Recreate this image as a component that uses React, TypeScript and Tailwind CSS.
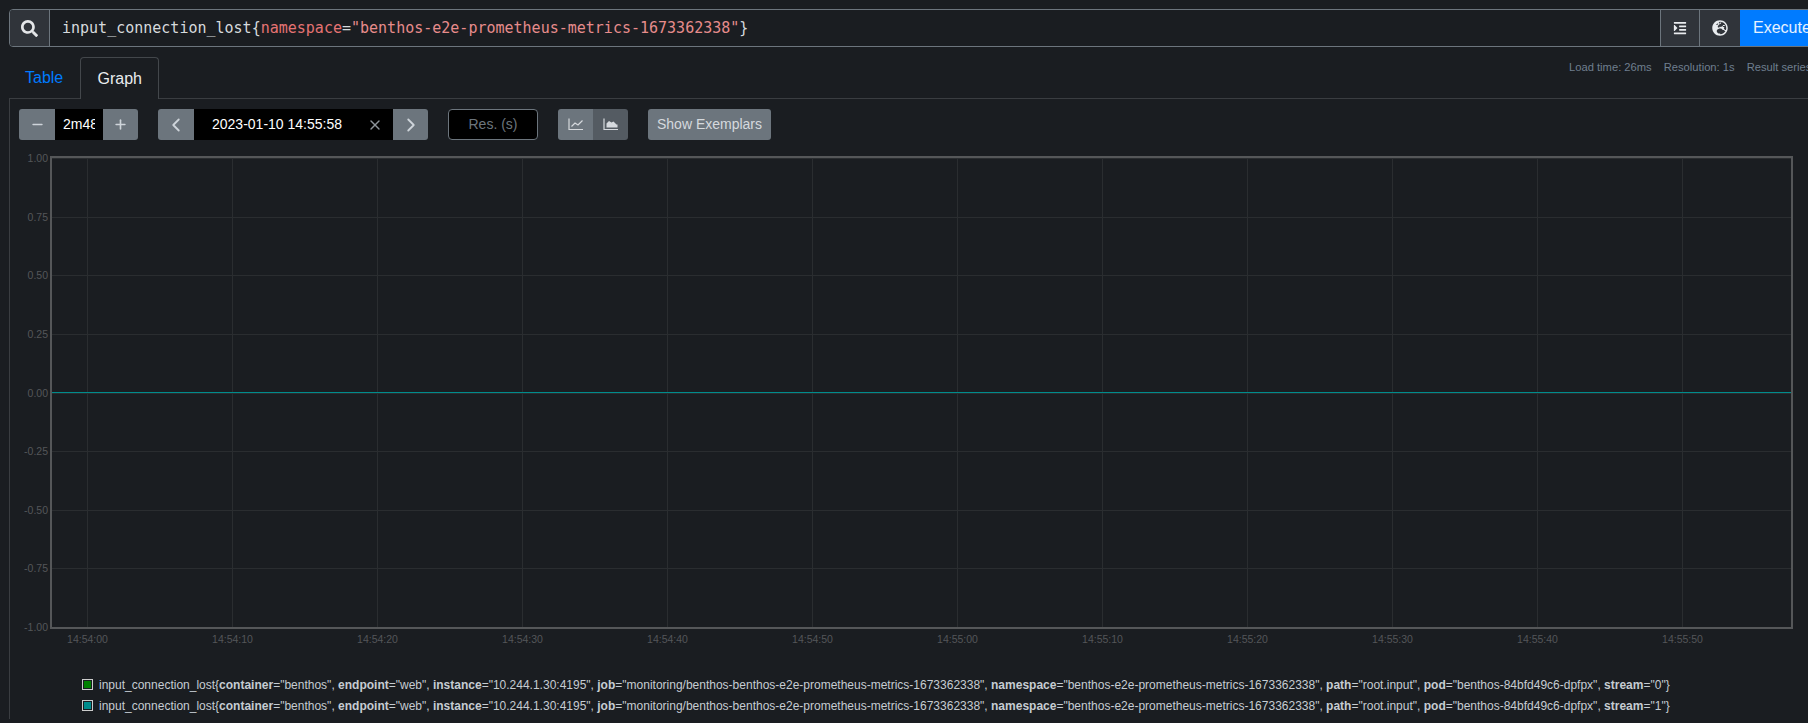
import { FaGlobeEurope, FaIndent, FaSearch } from "react-icons/fa";
import { ChevronLeft, ChevronRight, Minus, Plus, X } from "lucide-react";

const yTicks = ["1.00", "0.75", "0.50", "0.25", "0.00", "-0.25", "-0.50", "-0.75", "-1.00"];
const xTicks = [
  "14:54:00", "14:54:10", "14:54:20", "14:54:30", "14:54:40", "14:54:50",
  "14:55:00", "14:55:10", "14:55:20", "14:55:30", "14:55:40", "14:55:50",
];

function LineIcon() {
  return (
    <svg width="15" height="13" viewBox="0 0 15 13" fill="none" stroke="#d5d9dd" strokeWidth="1.2">
      <path d="M1 0.5V11.5H15" />
      <path d="M3.5 8.5L7 5L10 7L14.5 2.5" />
    </svg>
  );
}

function AreaIcon() {
  return (
    <svg width="15" height="13" viewBox="0 0 15 13" fill="none">
      <path d="M1 0.5V11.5H15" stroke="#d5d9dd" strokeWidth="1.2" />
      <path d="M3.5 9.5V5.5L6 3L8.5 4.5L10.5 3.5L13.5 6.5H14.5V9.5Z" fill="#d5d9dd" />
    </svg>
  );
}

function Plot() {
  const w = 1739;
  const h = 469;
  return (
    <div className="relative ml-[40px] h-[473px] w-[1743px] border-2 border-[#555759]">
      <svg className="absolute left-0 top-0" width={w} height={h}>
        {xTicks.map((_, i) => (
          <line key={i} x1={35.5 + i * 145} x2={35.5 + i * 145} y1={0} y2={h} stroke="#2a2d30" />
        ))}
        {yTicks.map((_, i) => (
          <line key={i} y1={Math.round((i * h) / 8) + 0.5} y2={Math.round((i * h) / 8) + 0.5} x1={0} x2={w} stroke="#2a2d30" />
        ))}
        <line x1={0} x2={w} y1={234.5} y2={234.5} stroke="#008000" />
        <line x1={0} x2={w} y1={234.5} y2={234.5} stroke="#008c8c" />
      </svg>
      {yTicks.map((t, i) => (
        <span
          key={t}
          className="absolute right-[calc(100%+4px)] text-[10.5px] leading-[14px] text-[#545659]"
          style={{ top: (i * h) / 8 - 7 }}
        >
          {t}
        </span>
      ))}
      {xTicks.map((t, i) => (
        <span
          key={t}
          className="absolute top-[calc(100%+5px)] w-[60px] text-center text-[10.5px] leading-[14px] text-[#545659]"
          style={{ left: 5.5 + i * 145 }}
        >
          {t}
        </span>
      ))}
    </div>
  );
}

function Val({ k, v, last }: { k: string; v: string; last?: boolean }) {
  return (
    <>
      <b className="font-bold">{k}</b>="{v}"{last ? "" : ", "}
    </>
  );
}

function LegendRow({ color, stream }: { color: string; stream: string }) {
  return (
    <div className="flex h-[21px] items-center">
      <span className="mr-[6px] h-[11px] w-[11px] shrink-0 border border-[#ccc] p-px">
        <span className="block h-full w-full" style={{ backgroundColor: color }} />
      </span>
      <span className="whitespace-nowrap">
        input_connection_lost{"{"}
        <Val k="container" v="benthos" />
        <Val k="endpoint" v="web" />
        <Val k="instance" v="10.244.1.30:4195" />
        <Val k="job" v="monitoring/benthos-benthos-e2e-prometheus-metrics-1673362338" />
        <Val k="namespace" v="benthos-e2e-prometheus-metrics-1673362338" />
        <Val k="path" v="root.input" />
        <Val k="pod" v="benthos-84bfd49c6-dpfpx" />
        <Val k="stream" v={stream} last />
        {"}"}
      </span>
    </div>
  );
}

export default function App() {
  return (
    <div className="h-[723px] w-full overflow-hidden bg-[#1a1d21] font-['Liberation_Sans',sans-serif] text-[16px] text-[#e9ecef]">
      <div className="w-[1860px] px-[9px] pt-[9px]">
        <div className="flex h-[38px] rounded-[4px] border border-[#6c757d]">
          <div className="flex w-[40px] items-center justify-center rounded-l-[3px] border-r border-[#6c757d] bg-[#30343a]">
            <FaSearch className="text-[17px] text-[#e4e6e8]" />
          </div>
          <div className="flex flex-1 items-center pl-[12px] font-['DejaVu_Sans_Mono',monospace] text-[15px] text-[#d6dadd]">
            input_connection_lost{"{"}
            <span className="text-[#e57373]">namespace</span>=<span className="text-[#e78c8c]">"benthos-e2e-prometheus-metrics-1673362338"</span>
            {"}"}
          </div>
          <div className="flex w-[40px] items-center justify-center border-x border-[#6c757d] bg-[#30343a]">
            <FaIndent className="text-[14px] text-[#e9ecef]" />
          </div>
          <div className="flex w-[40px] items-center justify-center bg-[#30343a]">
            <FaGlobeEurope className="text-[16px] text-[#e9ecef]" />
          </div>
          <button className="w-[110px] bg-[#007bff] pl-[13px] text-left text-white/90">Execute</button>
        </div>

        <div className="relative flex h-[52px] items-end border-b border-[#3a3d41]">
          <div className="flex h-[41px] items-center pl-[16px] pr-[17px] text-[#007bff]">Table</div>
          <div className="-mb-px flex h-[42px] w-[79px] items-center justify-center rounded-t-[4px] border border-b-0 border-[#43474b] bg-[#1a1d21]">Graph</div>
          <div className="absolute left-[1560px] top-[12px] flex gap-[12px] whitespace-nowrap text-[11.2px] text-[#6f7f8f]">
            <span>Load time: 26ms</span>
            <span>Resolution: 1s</span>
            <span>Result series: 2</span>
          </div>
        </div>

        <div className="h-[620px] border-l border-[#3a3d41] pt-[10px]">
          <div className="ml-[9px] flex h-[31px] text-[14px]">
            <div className="flex w-[119px]">
              <button className="flex w-[36px] items-center justify-center rounded-l-[3px] bg-[#6c757d]"><Minus size={15} strokeWidth={2.6} color="#ced4da" /></button>
              <div className="flex w-[48px] items-center bg-black pl-[8px] pr-[8px] text-white">
                <div className="overflow-hidden whitespace-nowrap">2m48s</div>
              </div>
              <button className="flex w-[35px] items-center justify-center rounded-r-[3px] bg-[#6c757d]"><Plus size={15} strokeWidth={2.6} color="#ced4da" /></button>
            </div>
            <div className="ml-[20px] flex w-[270px]">
              <button className="flex w-[36px] items-center justify-center rounded-l-[3px] bg-[#6c757d]"><ChevronLeft size={22} strokeWidth={2} color="#ced4da" /></button>
              <div className="flex w-[199px] items-center justify-between bg-black pl-[18px] pr-[10px] text-white">
                <span>2023-01-10 14:55:58</span>
                <X size={16} strokeWidth={2} color="#8d949a" />
              </div>
              <button className="flex w-[35px] items-center justify-center rounded-r-[3px] bg-[#6c757d]"><ChevronRight size={22} strokeWidth={2} color="#ced4da" /></button>
            </div>
            <div className="ml-[20px] flex w-[90px] items-center justify-center rounded-[4px] border border-[#6c757d] bg-black text-[#6c757d]">Res. (s)</div>
            <div className="ml-[20px] flex w-[70px]">
              <button className="flex w-[35px] items-center justify-center rounded-l-[3px] bg-[#6c757d]"><LineIcon /></button>
              <button className="flex w-[35px] items-center justify-center rounded-r-[3px] bg-[#545b62]"><AreaIcon /></button>
            </div>
            <button className="ml-[20px] w-[123px] rounded-[3px] bg-[#6c757d] text-[#d5d9dd]">Show Exemplars</button>
          </div>

          <div className="pt-[16px]">
            <Plot />
          </div>

          <div className="ml-[72px] mt-[45px] text-[12px] text-[#c6ccd2]">
            <LegendRow color="#008000" stream="0" />
            <LegendRow color="#008c8c" stream="1" />
          </div>
        </div>
      </div>
    </div>
  );
}
